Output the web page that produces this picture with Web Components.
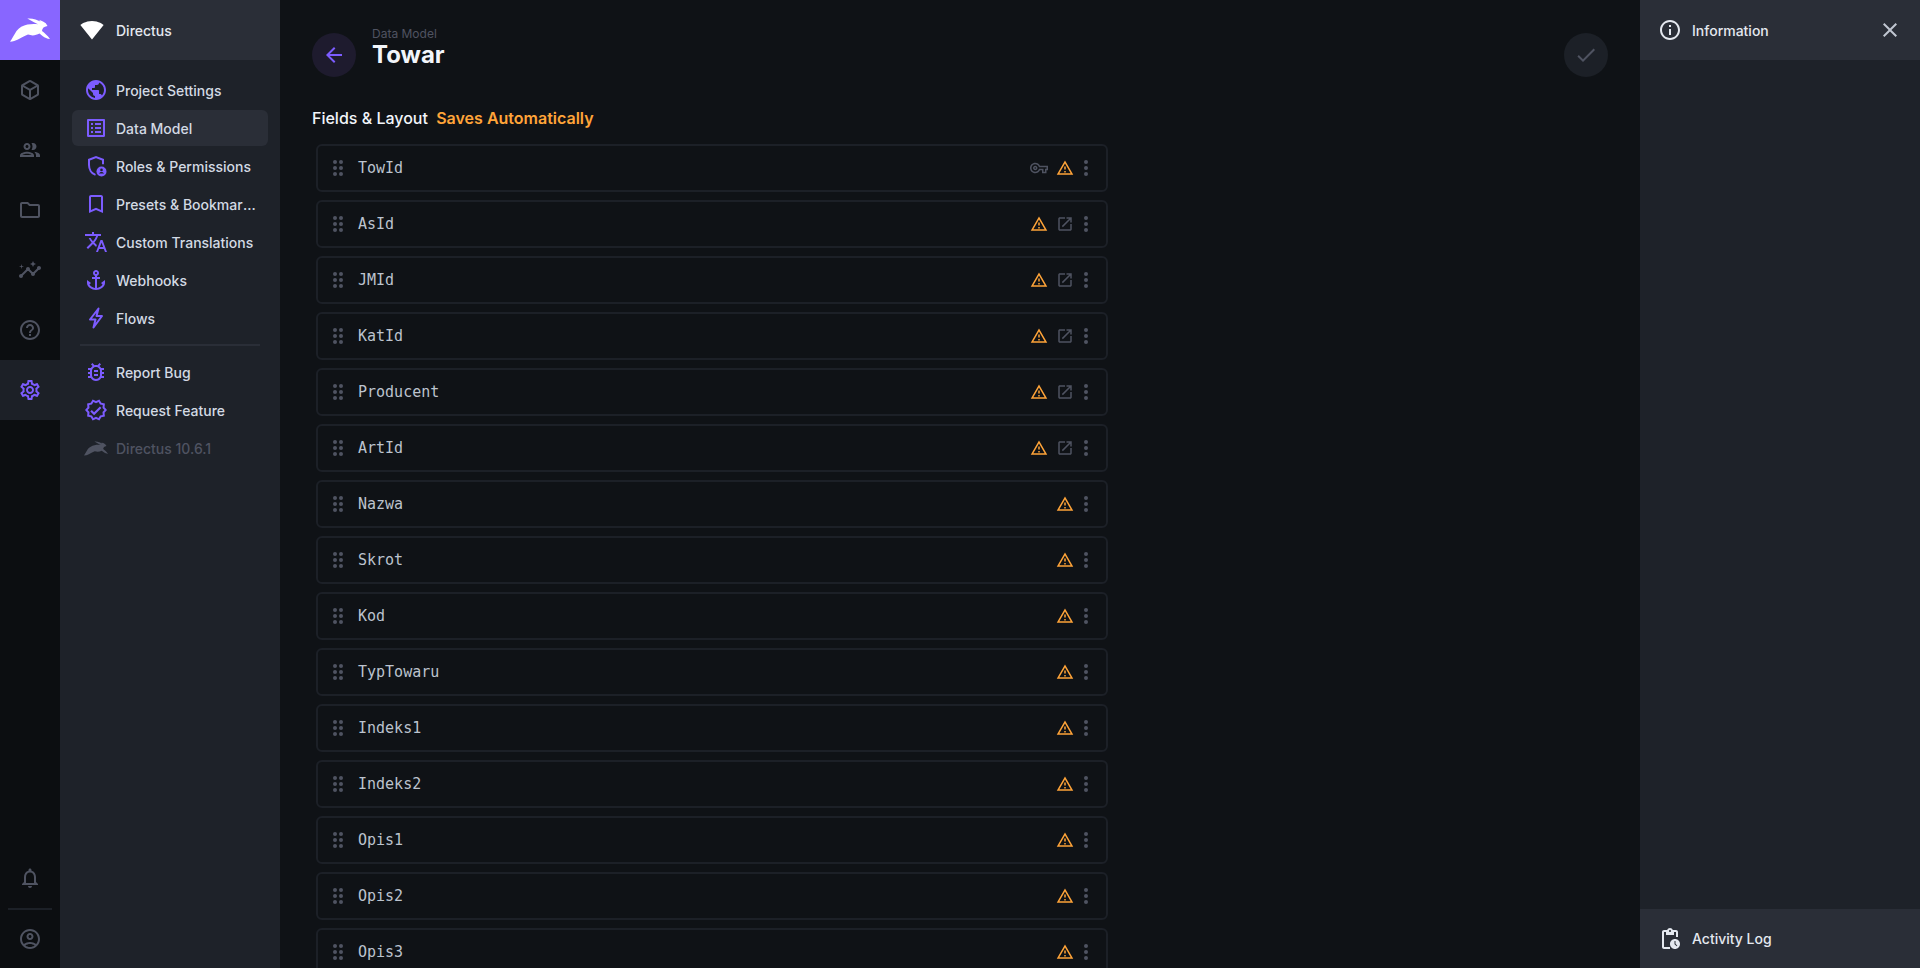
<!DOCTYPE html>
<html lang="en">
<head>
<meta charset="utf-8">
<title>Towar - Data Model</title>
<style>
  html, body { margin: 0; height: 100%; overflow: hidden; background: #0f1216; }
  body { font-family: Inter, "Liberation Sans", sans-serif; }
</style>
</head>
<body>
<app-shell></app-shell>

<script>
const ICONS = {
  box: `<path d="M11 19.425v-6.85L5 9.1v6.85l6 3.475Zm2 0 6-3.475V9.1l-6 3.475v6.85ZM12 10.85l5.925-3.425L12 4 6.075 7.425 12 10.85ZM4 17.7q-.475-.275-.738-.725Q3 16.525 3 15.975v-7.95q0-.55.262-1 .263-.45.738-.725l7-4.025q.475-.275 1-.275t1 .275L20 6.3q.475.275.738.725.262.45.262 1v7.95q0 .55-.262 1-.263.45-.738.725l-7 4.025q-.475.275-1 .275t-1-.275Z"/>`,
  group: `<path d="M9 13.75c-2.34 0-7 1.17-7 3.5V19h14v-1.75c0-2.33-4.66-3.5-7-3.5zM4.34 17c.84-.58 2.87-1.25 4.66-1.25s3.82.67 4.66 1.25H4.34zM9 12c1.93 0 3.5-1.57 3.5-3.5S10.93 5 9 5 5.5 6.57 5.5 8.5 7.07 12 9 12zm0-5c.83 0 1.5.67 1.5 1.5S9.83 10 9 10s-1.5-.67-1.5-1.5S8.17 7 9 7zm7.04 6.81c1.16.84 1.96 1.96 1.96 3.44V19h4v-1.75c0-2.02-3.5-3.17-5.96-3.44zM15 12c1.93 0 3.5-1.57 3.5-3.5S16.93 5 15 5c-.54 0-1.04.13-1.5.35.63.89 1 1.98 1 3.15s-.37 2.26-1 3.15c.46.22.96.35 1.5.35z"/>`,
  folder: `<path d="M20 6h-8l-2-2H4c-1.1 0-1.99.9-1.99 2L2 18c0 1.1.9 2 2 2h16c1.1 0 2-.9 2-2V8c0-1.1-.9-2-2-2zm0 12H4V6h5.17l2 2H20v10z"/>`,
  insights: `<path d="M21 8c-1.45 0-2.26 1.44-1.93 2.51l-3.55 3.56c-.3-.09-.74-.09-1.04 0l-2.55-2.55C12.27 10.45 11.46 9 10 9c-1.45 0-2.27 1.44-1.93 2.52l-4.56 4.55C2.44 15.74 1 16.55 1 18c0 1.1.9 2 2 2 1.45 0 2.26-1.44 1.93-2.51l4.55-4.56c.3.09.74.09 1.04 0l2.55 2.55C12.73 16.55 13.54 18 15 18c1.45 0 2.27-1.44 1.93-2.52l3.56-3.55c1.07.33 2.51-.48 2.51-1.93 0-1.1-.9-2-2-2z"/><path d="M15 9l.94-2.07L18 6l-2.06-.93L15 3l-.92 2.07L12 6l2.08.93zM3.5 11L4 9l2-.5L4 8l-.5-2L3 8l-2 .5L3 9z"/>`,
  help: `<path d="M11 18h2v-2h-2v2zm1-16C6.48 2 2 6.48 2 12s4.48 10 10 10 10-4.48 10-10S17.52 2 12 2zm0 18c-4.41 0-8-3.59-8-8s3.59-8 8-8 8 3.59 8 8-3.59 8-8 8zm0-14c-2.21 0-4 1.79-4 4h2c0-1.1.9-2 2-2s2 .9 2 2c0 2-3 1.75-3 5h2c0-2.25 3-2.5 3-5 0-2.21-1.79-4-4-4z"/>`,
  settings: `<path d="M19.43 12.98c.04-.32.07-.64.07-.98 0-.34-.03-.66-.07-.98l2.11-1.65c.19-.15.24-.42.12-.64l-2-3.46c-.09-.16-.26-.25-.44-.25-.06 0-.12.01-.17.03l-2.49 1c-.52-.4-1.08-.73-1.69-.98l-.38-2.65C14.46 2.18 14.25 2 14 2h-4c-.25 0-.46.18-.49.42l-.38 2.65c-.61.25-1.17.59-1.69.98l-2.49-1c-.06-.02-.12-.03-.18-.03-.17 0-.34.09-.43.25l-2 3.46c-.13.22-.07.49.12.64l2.11 1.65c-.04.32-.07.65-.07.98 0 .33.03.66.07.98l-2.11 1.65c-.19.15-.24.42-.12.64l2 3.46c.09.16.26.25.44.25.06 0 .12-.01.17-.03l2.49-1c.52.4 1.08.73 1.69.98l.38 2.65c.03.24.24.42.49.42h4c.25 0 .46-.18.49-.42l.38-2.65c.61-.25 1.17-.59 1.69-.98l2.49 1c.06.02.12.03.18.03.17 0 .34-.09.43-.25l2-3.46c.12-.22.07-.49-.12-.64l-2.11-1.65zm-1.98-1.71c.04.31.05.52.05.73 0 .21-.02.43-.05.73l-.14 1.13.89.7 1.08.84-.7 1.21-1.27-.51-1.04-.42-.9.68c-.43.32-.84.56-1.25.73l-1.06.43-.16 1.13-.2 1.35h-1.4l-.19-1.35-.16-1.13-1.06-.43c-.43-.18-.83-.41-1.23-.71l-.91-.7-1.06.43-1.27.51-.7-1.21 1.08-.84.89-.7-.14-1.13c-.03-.31-.05-.54-.05-.74s.02-.43.05-.73l.14-1.13-.89-.7-1.08-.84.7-1.21 1.27.51 1.04.42.9-.68c.43-.32.84-.56 1.25-.73l1.06-.43.16-1.13.2-1.35h1.39l.19 1.35.16 1.13 1.06.43c.43.18.83.41 1.23.71l.91.7 1.06-.43 1.27-.51.7 1.21-1.07.85-.89.7.14 1.13zM12 8c-2.21 0-4 1.79-4 4s1.79 4 4 4 4-1.79 4-4-1.79-4-4-4zm0 6c-1.1 0-2-.9-2-2s.9-2 2-2 2 .9 2 2-.9 2-2 2z"/>`,
  bell: `<path d="M12 22c1.1 0 2-.9 2-2h-4c0 1.1.9 2 2 2zm6-6v-5c0-3.07-1.63-5.64-4.5-6.32V4c0-.83-.67-1.5-1.5-1.5s-1.5.67-1.5 1.5v.68C7.64 5.36 6 7.92 6 11v5l-2 2v1h16v-1l-2-2zm-2 1H8v-6c0-2.48 1.51-4.5 4-4.5s4 2.02 4 4.5v6z"/>`,
  account: `<path d="M12 2C6.48 2 2 6.48 2 12s4.48 10 10 10 10-4.48 10-10S17.52 2 12 2zM7.35 18.5C8.66 17.56 10.26 17 12 17s3.34.56 4.65 1.5c-1.31.94-2.91 1.5-4.65 1.5s-3.34-.56-4.65-1.5zm10.79-1.38C16.45 15.8 14.32 15 12 15s-4.45.8-6.14 2.12C4.7 15.73 4 13.95 4 12c0-4.42 3.58-8 8-8s8 3.58 8 8c0 1.95-.7 3.73-1.86 5.12z"/><path d="M12 6c-1.93 0-3.5 1.57-3.5 3.5S10.07 13 12 13s3.5-1.57 3.5-3.5S13.93 6 12 6zm0 5c-.83 0-1.5-.67-1.5-1.5S11.17 8 12 8s1.5.67 1.5 1.5S12.83 11 12 11z"/>`,
  wifi: `<path d="M12.01 21.49L23.64 7c-.45-.34-4.93-4-11.64-4C5.28 3 .81 6.66.36 7l11.63 14.49.01.01.01-.01z"/>`,
  public: `<path d="M12 2C6.48 2 2 6.48 2 12s4.48 10 10 10 10-4.48 10-10S17.52 2 12 2zm-1 17.93c-3.95-.49-7-3.85-7-7.93 0-.62.08-1.21.21-1.79L9 15v1c0 1.1.9 2 2 2v1.93zm6.9-2.54c-.26-.81-1-1.39-1.9-1.39h-1v-3c0-.55-.45-1-1-1H8v-2h2c.55 0 1-.45 1-1V7h2c1.1 0 2-.9 2-2v-.41c2.93 1.19 5 4.06 5 7.41 0 2.08-.8 3.97-2.1 5.39z"/>`,
  list: `<path d="M19 5v14H5V5h14m1.1-2H3.9c-.5 0-.9.4-.9.9v16.2c0 .4.4.9.9.9h16.2c.4 0 .9-.5.9-.9V3.9c0-.5-.5-.9-.9-.9zM11 7h6v2h-6V7zm0 4h6v2h-6v-2zm0 4h6v2h-6zM7 7h2v2H7zm0 4h2v2H7zm0 4h2v2H7z"/>`,
  shield: `<path fill="none" stroke="currentColor" stroke-width="2" d="M11.5 20.9C7.5 19.6 5 15.4 5 11.1V5.7l7-2.6 7 2.6v4.6"/><circle cx="17.5" cy="17.5" r="5"/><circle cx="17.5" cy="15.9" r="1.3" fill="#1e2229"/><path fill="#1e2229" d="M14.9 19.6c.5-.9 1.5-1.5 2.6-1.5s2.1.6 2.6 1.5z"/>`,
  bookmark: `<path d="M17 3H7c-1.1 0-2 .9-2 2v16l7-3 7 3V5c0-1.1-.9-2-2-2zm0 15-5-2.18L7 18V5h10v13z"/>`,
  translate: `<path d="M12.87 15.07l-2.54-2.51.03-.03c1.74-1.94 2.98-4.17 3.71-6.53H17V4h-7V2H8v2H1v1.99h11.17C11.5 7.92 10.44 9.75 9 11.35 8.07 10.32 7.3 9.19 6.69 8h-2c.73 1.63 1.73 3.17 2.98 4.56l-5.09 5.02L4 19l5-5 3.11 3.11.76-2.04zM18.5 10h-2L12 22h2l1.12-3h4.75L21 22h2l-4.5-12zm-2.62 7l1.62-4.33L19.12 17h-3.24z"/>`,
  anchor: `<path d="M17 15l1.55 1.55c-.96 1.69-3.33 3.04-5.55 3.37V11h3V9h-3V7.82C14.16 7.4 15 6.3 15 5c0-1.65-1.35-3-3-3S9 3.35 9 5c0 1.3.84 2.4 2 2.82V9H8v2h3v8.92c-2.22-.33-4.59-1.68-5.55-3.37L7 15l-4-3v3c0 3.88 4.92 7 9 7s9-3.12 9-7v-3l-4 3zM12 4c.55 0 1 .45 1 1s-.45 1-1 1-1-.45-1-1 .45-1 1-1z"/>`,
  bolt: `<path fill="none" stroke="currentColor" stroke-width="2" stroke-linejoin="round" d="M14.5 2.5 6 13.5h5.5L9.5 21.5 18 10h-5.5z"/>`,
  bug: `<path d="M20 8h-2.81c-.45-.78-1.07-1.45-1.82-1.96L17 4.41 15.59 3l-2.17 2.17C12.96 5.06 12.49 5 12 5s-.96.06-1.41.17L8.41 3 7 4.41l1.62 1.63C7.88 6.55 7.26 7.22 6.81 8H4v2h2.09c-.05.33-.09.66-.09 1v1H4v2h2v1c0 .34.04.67.09 1H4v2h2.81c1.04 1.79 2.97 3 5.19 3s4.15-1.21 5.19-3H20v-2h-2.09c.05-.33.09-.66.09-1v-1h2v-2h-2v-1c0-.34-.04-.67-.09-1H20V8zm-4 4v3c0 .22-.03.47-.07.7l-.1.65-.37.65c-.72 1.24-2.04 2-3.46 2s-2.74-.77-3.46-2l-.37-.64-.1-.65C8.03 15.47 8 15.22 8 15v-4c0-.22.03-.47.07-.7l.1-.65.37-.65c.3-.52.72-.97 1.21-1.31l.57-.39.74-.18c.31-.08.63-.12.94-.12.32 0 .63.04.95.12l.68.16.61.42c.5.34.91.78 1.21 1.31l.38.65.1.65c.04.22.07.47.07.69v1zm-6 2h4v2h-4zm0-4h4v2h-4z"/>`,
  verified: `<path d="m23 12-2.44-2.79.34-3.69-3.61-.82-1.89-3.2L12 2.96 8.6 1.5 6.71 4.69 3.1 5.5l.34 3.7L1 12l2.44 2.79-.34 3.7 3.61.82L8.6 22.5l3.4-1.47 3.4 1.46 1.89-3.19 3.61-.82-.34-3.69L23 12zm-4.51 2.11.26 2.79-2.74.62-1.43 2.41L12 18.82l-2.58 1.11-1.43-2.41-2.74-.62.26-2.8L3.66 12l1.85-2.12-.26-2.78 2.74-.61 1.43-2.41L12 5.18l2.58-1.11 1.43 2.41 2.74.62-.26 2.79L20.34 12l-1.85 2.11zm-8.4.2-2.32-2.33-1.48 1.48 3.8 3.81 7.34-7.36-1.48-1.48-5.86 5.88z"/>`,
  back: `<path d="M20 11H7.83l5.59-5.59L12 4l-8 8 8 8 1.41-1.41L7.83 13H20v-2z"/>`,
  check: `<path d="M9 16.17 4.83 12l-1.42 1.41L9 19 21 7l-1.41-1.41z"/>`,
  warning: `<path d="M12 5.99L19.53 19H4.47L12 5.99M12 2L1 21h22L12 2zm1 14h-2v2h2v-2zm0-6h-2v4h2v-4z"/>`,
  open: `<path d="M19 19H5V5h7V3H5c-1.11 0-2 .9-2 2v14c0 1.1.89 2 2 2h14c1.1 0 2-.9 2-2v-7h-2v7zM14 3v2h3.59l-9.83 9.83 1.41 1.41L19 6.41V10h2V3h-7z"/>`,
  key: `<path d="M22 19h-6v-4h-2.68c-1.14 2.42-3.6 4-6.32 4-3.86 0-7-3.14-7-7s3.14-7 7-7c2.72 0 5.17 1.58 6.32 4H24v6h-2v4zm-4-2h2v-4h2v-2H11.94l-.23-.67C11.01 8.34 9.11 7 7 7c-2.76 0-5 2.24-5 5s2.24 5 5 5c2.11 0 4.01-1.34 4.71-3.33l.23-.67H18v4zM7 15c-1.65 0-3-1.35-3-3s1.35-3 3-3 3 1.35 3 3-1.35 3-3 3zm0-4c-.55 0-1 .45-1 1s.45 1 1 1 1-.45 1-1-.45-1-1-1z"/>`,
  more: `<circle cx="12" cy="6" r="2"/><circle cx="12" cy="12" r="2"/><circle cx="12" cy="18" r="2"/>`,
  drag: `<circle cx="9" cy="6" r="2"/><circle cx="15" cy="6" r="2"/><circle cx="9" cy="12" r="2"/><circle cx="15" cy="12" r="2"/><circle cx="9" cy="18" r="2"/><circle cx="15" cy="18" r="2"/>`,
  info: `<path d="M11 7h2v2h-2zm0 4h2v6h-2zm1-9C6.48 2 2 6.48 2 12s4.48 10 10 10 10-4.48 10-10S17.52 2 12 2zm0 18c-4.41 0-8-3.59-8-8s3.59-8 8-8 8 3.59 8 8-3.59 8-8 8z"/>`,
  close: `<path d="M19 6.41 17.59 5 12 10.59 6.41 5 5 6.41 10.59 12 5 17.59 6.41 19 12 13.41 17.59 19 19 17.59 13.41 12z"/>`,
  pending: `<path d="M17 12c-2.76 0-5 2.24-5 5s2.24 5 5 5 5-2.24 5-5-2.24-5-5-5zm1.65 7.35L16.5 17.2V14h1v2.79l1.85 1.85-.7.71zM18 3h-3.18C14.4 1.84 13.3 1 12 1s-2.4.84-2.82 2H6c-1.1 0-2 .9-2 2v15c0 1.1.9 2 2 2h6v-2H6V5h2v3h8V5h2v5h2V5c0-1.1-.9-2-2-2zm-6 2c-.55 0-1-.45-1-1s.45-1 1-1 1 .45 1 1-.45 1-1 1z"/>`,
  rabbit: `<path d="M0 23.700C2 21 4 17 6.500 13 9 9.500 13 7.500 17.500 6.500 21 5.800 25 5.800 28 6.200L24 4.200 17.300 .5C20 .2 23 .6 25.500 1.500L30.500 3.600 29 1.800 33 3.400 35.800 5.300 37.500 8 35 8.800 33.500 9.600C32.500 11 32 12 32 13 34.500 15 37.500 17.500 40 21 37 20.800 35 19.800 32.500 18L29.500 15.600C26 17.500 22 18 18 16.600 14 18 11 20 8 21.500 5.500 22.800 3 23.500 0 23.700Z"/>`
}

class DIcon extends HTMLElement {
  constructor() {
    super()
    this.attachShadow({ mode: "open" })
  }

  connectedCallback() {
    const name = this.getAttribute("name") || ""
    const size = this.getAttribute("size") || "24"
    const box = name === "rabbit" ? "0 0 40 24" : "0 0 24 24"
    const width = this.getAttribute("width") || size
    this.shadowRoot.innerHTML = `
      <style>
        :host { display: inline-flex; flex: none; width: ${width}px; height: ${size}px; }
        svg { display: block; width: 100%; height: 100%; fill: currentColor; }
      </style>
      <svg viewBox="${box}" aria-hidden="true">${ICONS[name] || ""}</svg>
    `
  }
}
customElements.define("d-icon", DIcon)

class ModuleBar extends HTMLElement {
  constructor() {
    super()
    this.attachShadow({ mode: "open" })
    const modules = ["box", "group", "folder", "insights", "help"]
    this.shadowRoot.innerHTML = `
      <style>
        :host {
          display: flex;
          flex-direction: column;
          flex: none;
          width: 60px;
          height: 100%;
          background: #0c0e11;
          color: #4f5361;
        }
        .logo {
          display: flex;
          align-items: center;
          justify-content: center;
          height: 60px;
          background: #8866ff;
          color: #fff;
        }
        .btn {
          display: flex;
          align-items: center;
          justify-content: center;
          height: 60px;
        }
        .active { background: #1c2027; color: #7c5cff; }
        .foot { margin-top: auto; }
        .line { height: 2px; margin: 0 8px; background: #1c2027; }
        .last { height: 58px; }
      </style>
      <div class="logo"><d-icon name="rabbit" width="40" size="24"></d-icon></div>
      ${modules.map((m) => `<div class="btn"><d-icon name="${m}"></d-icon></div>`).join("")}
      <div class="btn active"><d-icon name="settings"></d-icon></div>
      <div class="foot">
        <div class="btn"><d-icon name="bell"></d-icon></div>
        <div class="line"></div>
        <div class="btn last"><d-icon name="account"></d-icon></div>
      </div>
    `
  }
}
customElements.define("module-bar", ModuleBar)

class NavItem extends HTMLElement {
  constructor() {
    super()
    this.attachShadow({ mode: "open" })
  }

  connectedCallback() {
    const icon = this.getAttribute("icon")
    const isRabbit = icon === "rabbit"
    this.shadowRoot.innerHTML = `
      <style>
        :host {
          display: flex;
          align-items: center;
          gap: 8px;
          height: 36px;
          padding: 0 12px;
          border-radius: 6px;
          font-size: 14px;
          font-weight: 500;
          color: #d3dae4;
        }
        :host([active]) { background: #2a2e37; }
        :host([muted]) { color: #4f5361; }
        d-icon { color: #7c5cff; }
        :host([muted]) d-icon { color: #4f5361; }
        .label { flex: 1; min-width: 0; white-space: nowrap; overflow: hidden; text-overflow: ellipsis; }
      </style>
      <d-icon name="${icon}" ${isRabbit ? 'width="24" size="15"' : ""}></d-icon>
      <span class="label"><slot></slot></span>
    `
  }
}
customElements.define("nav-item", NavItem)

class NavSidebar extends HTMLElement {
  constructor() {
    super()
    this.attachShadow({ mode: "open" })
    this.shadowRoot.innerHTML = `
      <style>
        :host {
          display: flex;
          flex-direction: column;
          flex: none;
          width: 220px;
          height: 100%;
          background: #1e2229;
        }
        .project {
          display: flex;
          align-items: center;
          gap: 12px;
          height: 60px;
          padding: 0 20px;
          background: #2a2e37;
          color: #fff;
          font-size: 14px;
          font-weight: 500;
        }
        .project span { color: #e4e8ef; }
        .list { display: flex; flex-direction: column; gap: 2px; padding: 12px; }
      </style>
      <div class="project"><d-icon name="wifi"></d-icon><span>Directus</span></div>
      <div class="list"><slot></slot></div>
    `
  }
}
customElements.define("nav-sidebar", NavSidebar)

class NavDivider extends HTMLElement {
  constructor() {
    super()
    this.attachShadow({ mode: "open" })
    this.shadowRoot.innerHTML = `
      <style>
        :host { display: block; height: 2px; margin: 6px 8px; background: #2a2e37; }
      </style>
    `
  }
}
customElements.define("nav-divider", NavDivider)

class PageHeader extends HTMLElement {
  constructor() {
    super()
    this.attachShadow({ mode: "open" })
    this.shadowRoot.innerHTML = `
      <style>
        :host {
          display: flex;
          align-items: center;
          gap: 16px;
          padding: 33px 32px 0;
        }
        .round {
          display: flex;
          align-items: center;
          justify-content: center;
          flex: none;
          width: 44px;
          height: 44px;
          border-radius: 50%;
        }
        .back { background: #1e1b2e; color: #7c5cff; }
        .save { margin-left: auto; background: #1c2027; color: #4f5361; }
        .title { display: flex; flex-direction: column; align-self: flex-start; margin-top: -6px; }
        .crumb { font-size: 12px; line-height: 14px; color: #4f5361; }
        h1 { margin: 0; font-size: 24px; line-height: 28px; font-weight: 700; color: #f2f5fa; }
      </style>
      <div class="round back"><d-icon name="back"></d-icon></div>
      <div class="title">
        <div class="crumb">Data Model</div>
        <h1><slot></slot></h1>
      </div>
      <div class="round save"><d-icon name="check"></d-icon></div>
    `
  }
}
customElements.define("page-header", PageHeader)

class FieldRow extends HTMLElement {
  constructor() {
    super()
    this.attachShadow({ mode: "open" })
  }

  connectedCallback() {
    const icons = (this.getAttribute("icons") || "warning").split(" ")
    this.shadowRoot.innerHTML = `
      <style>
        :host {
          display: flex;
          align-items: center;
          box-sizing: border-box;
          height: 48px;
          padding: 0 8px;
          border: 2px solid #1c2027;
          border-radius: 6px;
          color: #4f5361;
        }
        .name {
          margin-left: 8px;
          font-family: "DejaVu Sans Mono", "Liberation Mono", monospace;
          font-size: 15px;
          color: #bcc3ce;
        }
        .icons { display: flex; align-items: center; gap: 8px; margin-left: auto; }
        .warning { color: #ffa439; }
      </style>
      <d-icon name="drag"></d-icon>
      <span class="name"><slot></slot></span>
      <div class="icons">
        ${icons.map((i) => `<d-icon class="${i}" name="${i}" size="18"></d-icon>`).join("")}
      </div>
      <d-icon name="more"></d-icon>
    `
  }
}
customElements.define("field-row", FieldRow)

class FieldsPanel extends HTMLElement {
  constructor() {
    super()
    this.attachShadow({ mode: "open" })
    this.shadowRoot.innerHTML = `
      <style>
        :host { display: block; padding: 30px 32px 0; }
        .label { font-size: 16px; line-height: 22px; font-weight: 500; color: #f2f5fa; }
        .note { margin-left: 4px; font-weight: 600; color: #ffa439; }
        .list {
          display: flex;
          flex-direction: column;
          gap: 8px;
          width: 792px;
          margin: 15px 0 0 4px;
        }
      </style>
      <div class="label">Fields &amp; Layout <span class="note">Saves Automatically</span></div>
      <div class="list"><slot></slot></div>
    `
  }
}
customElements.define("fields-panel", FieldsPanel)

class InfoSidebar extends HTMLElement {
  constructor() {
    super()
    this.attachShadow({ mode: "open" })
    this.shadowRoot.innerHTML = `
      <style>
        :host {
          display: flex;
          flex-direction: column;
          flex: none;
          width: 280px;
          height: 100%;
          background: #1e2229;
          font-size: 14px;
          font-weight: 500;
          color: #e4e8ef;
        }
        .bar {
          display: flex;
          align-items: center;
          gap: 10px;
          padding: 0 18px;
          background: #2a2e37;
        }
        .top { height: 60px; }
        .bottom { height: 59px; margin-top: auto; }
        .close { margin-left: auto; color: #c0c6d1; }
      </style>
      <div class="bar top">
        <d-icon name="info"></d-icon>
        <span>Information</span>
        <d-icon class="close" name="close"></d-icon>
      </div>
      <div class="bar bottom">
        <d-icon name="pending"></d-icon>
        <span>Activity Log</span>
      </div>
    `
  }
}
customElements.define("info-sidebar", InfoSidebar)

class AppShell extends HTMLElement {
  constructor() {
    super()
    this.attachShadow({ mode: "open" })
    const nav = [
      ["public", "Project Settings"],
      ["list", "Data Model", "active"],
      ["shield", "Roles & Permissions"],
      ["bookmark", "Presets & Bookmarks"],
      ["translate", "Custom Translations"],
      ["anchor", "Webhooks"],
      ["bolt", "Flows"]
    ]
    const extra = [
      ["bug", "Report Bug"],
      ["verified", "Request Feature"],
      ["rabbit", "Directus 10.6.1", "muted"]
    ]
    const navHtml = (items) => items.map(([icon, label, flag]) =>
      `<nav-item icon="${icon}" ${flag || ""}>${label.replace("&", "&amp;")}</nav-item>`
    ).join("")
    const fields = [
      ["TowId", "key warning"],
      ["AsId", "warning open"],
      ["JMId", "warning open"],
      ["KatId", "warning open"],
      ["Producent", "warning open"],
      ["ArtId", "warning open"],
      ["Nazwa"], ["Skrot"], ["Kod"], ["TypTowaru"], ["Indeks1"],
      ["Indeks2"], ["Opis1"], ["Opis2"], ["Opis3"]
    ]
    this.shadowRoot.innerHTML = `
      <style>
        :host {
          display: flex;
          width: 100vw;
          height: 100vh;
          overflow: hidden;
          background: #0f1216;
          font-family: Inter, "Liberation Sans", sans-serif;
        }
        main { flex: 1; min-width: 0; height: 100%; overflow: hidden; }
      </style>
      <module-bar></module-bar>
      <nav-sidebar>
        ${navHtml(nav)}
        <nav-divider></nav-divider>
        ${navHtml(extra)}
      </nav-sidebar>
      <main>
        <page-header>Towar</page-header>
        <fields-panel>
          ${fields.map(([name, icons]) => `<field-row ${icons ? `icons="${icons}"` : ""}>${name}</field-row>`).join("")}
        </fields-panel>
      </main>
      <info-sidebar></info-sidebar>
    `
  }
}
customElements.define("app-shell", AppShell)
</script>
</body>
</html>
